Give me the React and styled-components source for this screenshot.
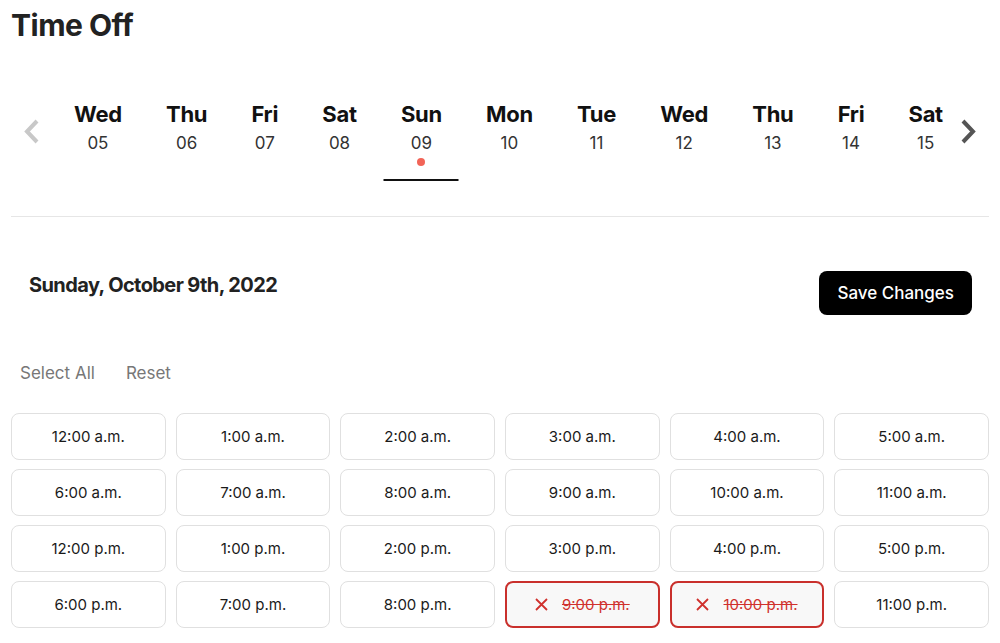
import React, { useState } from 'react';
import styled, { createGlobalStyle, css } from 'styled-components';

const GlobalStyle = createGlobalStyle`
    body {
        margin: 0;
        background: #fff;
        font-family: Inter, "Noto Sans", sans-serif;
    }
`;

const Page = styled.div`
    padding: 0 11px;
`;

const Title = styled.h1`
    margin: 7px 0 0;
    font-size: 30px;
    line-height: 37px;
    font-weight: 700;
    color: #222;
    letter-spacing: -0.5px;
`;

const Strip = styled.div`
    display: flex;
    align-items: flex-start;
    margin-top: 57px;
    padding: 0 12px;
`;

const Chevron = styled.button`
    border: none;
    background: none;
    padding: 0;
    margin-top: 17px;
    width: 18px;
    height: 27px;
    color: ${({ muted }) => (muted ? '#c8c8c8' : '#555')};
    cursor: pointer;
    display: flex;
`;

const DayList = styled.div`
    flex: 1;
    display: flex;
    justify-content: space-between;
    align-items: flex-start;
    margin: 0 16px 0 33px;
`;

const DayItem = styled.div`
    position: relative;
    display: flex;
    flex-direction: column;
    align-items: center;
    padding-bottom: 15px;
    cursor: pointer;

    ${({ active }) => active && css`
        &::after {
            content: '';
            position: absolute;
            left: 50%;
            bottom: 0;
            width: 75px;
            height: 2px;
            transform: translateX(-50%);
            background: #111;
        }
    `}
`;

const DayName = styled.div`
    font-size: 22px;
    line-height: 26px;
    font-weight: 700;
    color: #111;
    letter-spacing: -0.3px;
`;

const DayNum = styled.div`
    margin-top: 5px;
    font-size: 17px;
    line-height: 22px;
    color: #333;
`;

const Dot = styled.span`
    margin-top: 4px;
    width: 8px;
    height: 8px;
    border-radius: 50%;
    background: #f26457;
`;

const Divider = styled.hr`
    margin: 35px 0 0;
    border: none;
    border-top: 1px solid #e6e6e6;
`;

const HeaderRow = styled.div`
    display: flex;
    justify-content: space-between;
    align-items: flex-start;
    margin-top: 54px;
    padding: 0 17px 0 18px;
`;

const DateHeading = styled.h2`
    margin: 2px 0 0;
    font-size: 20px;
    line-height: 24px;
    font-weight: 700;
    color: #222;
    letter-spacing: -0.6px;
`;

const SaveButton = styled.button`
    height: 44px;
    padding: 0 18px;
    border: none;
    border-radius: 8px;
    background: #000;
    color: #fff;
    font-family: inherit;
    font-size: 17px;
    font-weight: 500;
    cursor: pointer;
`;

const Actions = styled.div`
    display: flex;
    gap: 31px;
    margin-top: 48px;
    padding-left: 9px;
`;

const TextButton = styled.button`
    border: none;
    background: none;
    padding: 0;
    font-family: inherit;
    font-size: 17px;
    line-height: 20px;
    color: #777;
    cursor: pointer;
`;

const SlotGrid = styled.div`
    display: grid;
    grid-template-columns: repeat(6, 1fr);
    column-gap: 10px;
    row-gap: 9px;
    margin-top: 30px;
`;

const Slot = styled.button`
    height: 47px;
    display: flex;
    align-items: center;
    justify-content: center;
    gap: 14px;
    border-radius: 8px;
    font-family: inherit;
    font-size: 15px;
    cursor: pointer;
    border: 1px solid #e0e0e0;
    background: #fff;
    color: #1a1a1a;

    ${({ off }) => off && css`
        border: 2px solid #c9302c;
        background: #f8f8f8;
        color: #d0312d;
        text-decoration: line-through;
    `}
`;

const days = [
    ['Wed', '05'], ['Thu', '06'], ['Fri', '07'], ['Sat', '08'], ['Sun', '09'], ['Mon', '10'],
    ['Tue', '11'], ['Wed', '12'], ['Thu', '13'], ['Fri', '14'], ['Sat', '15'],
];

const hours = Array.from({ length: 24 }, (_, i) => {
    const h = i % 12 === 0 ? 12 : i % 12;
    return `${h}:00 ${i < 12 ? 'a.m.' : 'p.m.'}`;
});

function ChevronIcon({ dir }) {
    const points = dir === 'left' ? '14,3 4,13.5 14,24' : '4,3 14,13.5 4,24';
    return (
        <svg width="18" height="27" viewBox="0 0 18 27" fill="none">
            <polyline points={points} stroke="currentColor" strokeWidth="4" strokeLinejoin="miter" />
        </svg>
    );
}

function XIcon() {
    return (
        <svg width="13" height="13" viewBox="0 0 13 13" fill="none">
            <path d="M1 1L12 12M12 1L1 12" stroke="currentColor" strokeWidth="1.8" />
        </svg>
    );
}

export default function App() {
    const [activeDay, setActiveDay] = useState(4);
    const [offHours, setOffHours] = useState([21, 22]);

    const toggleHour = (i) => {
        setOffHours((prev) => (prev.includes(i) ? prev.filter((h) => h !== i) : [...prev, i]));
    };

    return (
        <Page>
            <GlobalStyle />
            <Title>Time Off</Title>

            <Strip>
                <Chevron muted><ChevronIcon dir="left" /></Chevron>
                <DayList>
                    {days.map(([name, num], i) => (
                        <DayItem key={i} active={i === activeDay} onClick={() => setActiveDay(i)}>
                            <DayName>{name}</DayName>
                            <DayNum>{num}</DayNum>
                            {i === 4 && <Dot />}
                        </DayItem>
                    ))}
                </DayList>
                <Chevron><ChevronIcon dir="right" /></Chevron>
            </Strip>

            <Divider />

            <HeaderRow>
                <DateHeading>Sunday, October 9th, 2022</DateHeading>
                <SaveButton>Save Changes</SaveButton>
            </HeaderRow>

            <Actions>
                <TextButton onClick={() => setOffHours(hours.map((_, i) => i))}>Select All</TextButton>
                <TextButton onClick={() => setOffHours([])}>Reset</TextButton>
            </Actions>

            <SlotGrid>
                {hours.map((label, i) => {
                    const off = offHours.includes(i);
                    return (
                        <Slot key={i} off={off} onClick={() => toggleHour(i)}>
                            {off && <XIcon />}
                            {label}
                        </Slot>
                    );
                })}
            </SlotGrid>
        </Page>
    );
}
